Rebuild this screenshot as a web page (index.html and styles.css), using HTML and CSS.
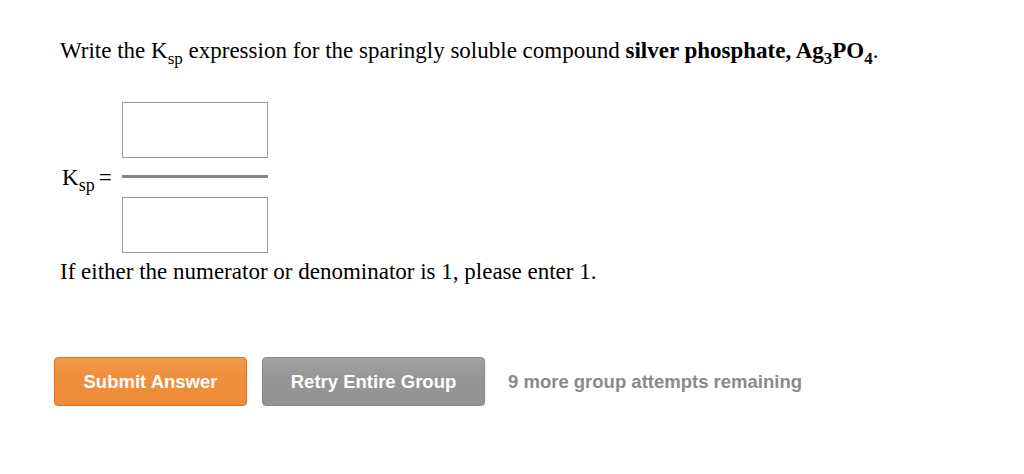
FILE: index.html
```html
<!DOCTYPE html>
<html lang="en">
<head>
    <meta charset="UTF-8">
    <meta name="viewport" content="width=device-width, initial-scale=1.0">
    <title>Ksp Question</title>
    <link rel="stylesheet" href="styles.css">
</head>
<body>
    <div id="question">
        <p class="prompt">Write the K<sub>sp</sub> expression for the sparingly soluble compound <b>silver phosphate, Ag<sub>3</sub>PO<sub>4</sub></b>.</p>
        <div class="expression">
            <div class="label">K<sub>sp</sub><span class="equals">=</span></div>
            <div class="fraction">
                <input type="text" class="answerbox">
                <div class="bar"></div>
                <input type="text" class="answerbox">
            </div>
        </div>
        <p class="note">If either the numerator or denominator is 1, please enter 1.</p>
    </div>
    <div id="controls">
        <button class="btn submit">Submit Answer</button>
        <button class="btn retry">Retry Entire Group</button>
        <span class="attempts">9 more group attempts remaining</span>
    </div>
</body>
</html>
```

FILE: styles.css
```css
body {
    margin: 0;
    background-color: white;
    font-family: 'Liberation Serif', 'Times New Roman', serif;
    color: #000;
}
#question {
    padding: 37px 0 0 60px;
    font-size: 23px;
}
.prompt {
    margin: 0;
    line-height: 28px;
}
sub {
    font-size: 17px;
    vertical-align: -6px;
    line-height: 0;
}
.expression {
    display: flex;
    align-items: center;
    margin-top: 37px;
}
.label {
    width: 60px;
    padding-left: 2px;
    line-height: 28px;
}
.label sub {
    font-size: 18px;
}
.equals {
    margin-left: 4px;
}
.fraction {
    display: flex;
    flex-direction: column;
    width: 146px;
}
.answerbox {
    box-sizing: border-box;
    width: 146px;
    height: 56px;
    border: 1px solid #9a9a9a;
    margin: 0;
    outline: none;
}
.bar {
    height: 3px;
    background-color: #858585;
    margin: 17px 0 19px 0;
}
.note {
    margin: 5px 0 0 0;
    line-height: 28px;
}
#controls {
    display: flex;
    align-items: center;
    padding: 71px 0 0 54px;
}
.btn {
    box-sizing: border-box;
    height: 49px;
    border-radius: 4px;
    font-family: 'Liberation Sans', Arial, sans-serif;
    font-weight: bold;
    font-size: 18.5px;
    color: white;
    cursor: pointer;
    box-shadow: 0 1px 2px rgba(0, 0, 0, 0.15);
}
.submit {
    width: 193px;
    border: 1px solid #e0702c;
    background: linear-gradient(#f39a4a, #ef8f3d 40%, #ee8a38);
}
.retry {
    width: 223px;
    margin-left: 15px;
    border: 1px solid #8a8a8a;
    background: linear-gradient(#a2a2a2, #969696 40%, #939393);
}
.attempts {
    margin-left: 23px;
    font-family: 'Liberation Sans', Arial, sans-serif;
    font-weight: bold;
    font-size: 18.5px;
    color: #8a8a8a;
}
```
